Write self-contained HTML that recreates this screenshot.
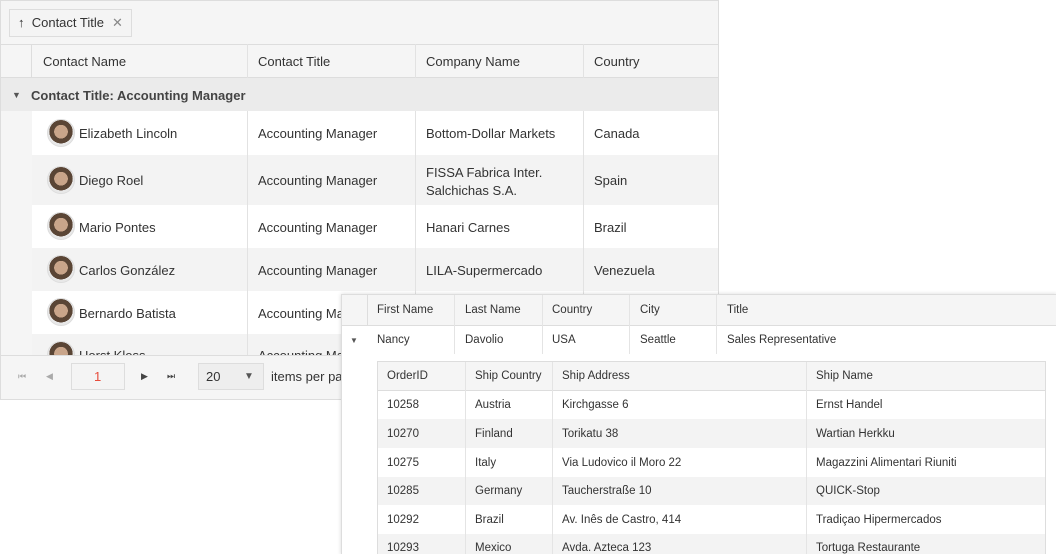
<html style="overflow:hidden"><head><style>
html,body{margin:0;width:1056px;height:554px;overflow:hidden}
body{background:#fff;font-family:"Liberation Sans",sans-serif;position:relative;color:#333}
div{box-sizing:border-box}
.a{position:absolute}
.t{position:absolute;font-size:13px;white-space:nowrap}
.s{position:absolute;font-size:11.5px;white-space:nowrap}
.av{position:absolute;width:28px;height:28px;border-radius:50%;background:radial-gradient(circle at 50% 45%,#c9a58a 0 35%,#5a4535 36% 60%,#e8e8e8 61%);border:1px solid #ddd}
</style></head><body>
<!-- grid 1 -->
<div class="a" style="left:0;top:0;width:719px;height:400px;border:1px solid #ddd;background:#f5f5f5"></div>
<div class="a" style="top:9px;left:9px;width:123px;height:28px;border:1px solid #ddd;background:#f4f4f4"></div>
<div class="t" style="left:18px;top:15px">↑&nbsp;&nbsp;Contact Title</div>
<div class="t" style="left:112px;top:15px;color:#888">✕</div>
<div class="a" style="left:1px;top:44px;width:717px;height:34px;background:#f5f5f5;border-top:1px solid #ddd;border-bottom:1px solid #ddd"></div>
<div class="a" style="left:31px;top:44px;width:1px;height:34px;background:#ddd"></div>
<div class="a" style="left:247px;top:44px;width:1px;height:311px;background:#e2e2e2"></div>
<div class="a" style="left:415px;top:44px;width:1px;height:311px;background:#e2e2e2"></div>
<div class="a" style="left:583px;top:44px;width:1px;height:311px;background:#e2e2e2"></div>
<div class="t" style="left:43px;top:54px">Contact Name</div>
<div class="t" style="left:258px;top:54px">Contact Title</div>
<div class="t" style="left:426px;top:54px">Company Name</div>
<div class="t" style="left:594px;top:54px">Country</div>
<div class="a" style="left:1px;top:78px;width:717px;height:33px;background:#ebebeb"></div>
<div class="t" style="left:12px;top:90px;font-size:9px;color:#555">▼</div>
<div class="t" style="left:31px;top:88px;font-weight:bold;color:#444">Contact Title: Accounting Manager</div>
<div class="a" style="left:32px;top:111px;width:686px;height:44px;background:#fff"></div>
<div class="a" style="left:32px;top:155px;width:686px;height:50px;background:#f3f3f3"></div>
<div class="a" style="left:32px;top:205px;width:686px;height:43px;background:#fff"></div>
<div class="a" style="left:32px;top:248px;width:686px;height:43px;background:#f3f3f3"></div>
<div class="a" style="left:32px;top:291px;width:686px;height:43px;background:#fff"></div>
<div class="a" style="left:32px;top:334px;width:686px;height:21px;background:#f3f3f3;overflow:hidden">
<div class="av" style="left:15px;top:7px;position:absolute"></div><div class="t" style="left:47px;top:14px">Horst Kloss</div><div class="t" style="left:226px;top:14px">Accounting Manager</div></div>
<div class="a" style="left:247px;top:111px;width:1px;height:244px;background:#e2e2e2"></div>
<div class="a" style="left:415px;top:111px;width:1px;height:244px;background:#e2e2e2"></div>
<div class="a" style="left:583px;top:111px;width:1px;height:244px;background:#e2e2e2"></div>
<div class="av" style="left:47px;top:119px"></div><div class="t" style="left:79px;top:126px">Elizabeth Lincoln</div><div class="t" style="left:258px;top:126px">Accounting Manager</div><div class="t" style="left:426px;top:126px">Bottom-Dollar Markets</div><div class="t" style="left:594px;top:126px">Canada</div>
<div class="av" style="left:47px;top:166px"></div><div class="t" style="left:79px;top:173px">Diego Roel</div><div class="t" style="left:258px;top:173px">Accounting Manager</div><div class="t" style="left:426px;top:164px;line-height:18px">FISSA Fabrica Inter.<br>Salchichas S.A.</div><div class="t" style="left:594px;top:173px">Spain</div>
<div class="av" style="left:47px;top:212px"></div><div class="t" style="left:79px;top:220px">Mario Pontes</div><div class="t" style="left:258px;top:220px">Accounting Manager</div><div class="t" style="left:426px;top:220px">Hanari Carnes</div><div class="t" style="left:594px;top:220px">Brazil</div>
<div class="av" style="left:47px;top:255px"></div><div class="t" style="left:79px;top:263px">Carlos González</div><div class="t" style="left:258px;top:263px">Accounting Manager</div><div class="t" style="left:426px;top:263px">LILA-Supermercado</div><div class="t" style="left:594px;top:263px">Venezuela</div>
<div class="av" style="left:47px;top:298px"></div><div class="t" style="left:79px;top:306px">Bernardo Batista</div><div class="t" style="left:258px;top:306px">Accounting Manager</div>
<div class="a" style="left:1px;top:355px;width:717px;height:44px;background:#f5f5f5;border-top:1px solid #ddd"></div>
<div class="t" style="left:18px;top:371px;font-size:9px;color:#aaa">⏮</div>
<div class="t" style="left:46px;top:371px;font-size:9px;color:#aaa">◀</div>
<div class="a" style="left:71px;top:363px;width:54px;height:27px;border:1px solid #ddd;background:#f4f4f4"></div>
<div class="t" style="left:94px;top:369px;color:#e74c3c">1</div>
<div class="t" style="left:141px;top:371px;font-size:9px;color:#444">▶</div>
<div class="t" style="left:167px;top:371px;font-size:9px;color:#444">⏭</div>
<div class="a" style="left:198px;top:363px;width:66px;height:27px;border:1px solid #ddd;background:#eee"></div>
<div class="t" style="left:206px;top:369px">20</div>
<div class="t" style="left:244px;top:371px;font-size:10px;color:#555">▼</div>
<div class="t" style="left:271px;top:369px">items per page</div>
<!-- grid 2 -->
<div class="a" style="left:341px;top:294px;width:716px;height:261px;background:#fff;border:1px solid #ddd;box-shadow:0 0 4px rgba(0,0,0,.15)"></div>
<div class="a" style="left:342px;top:295px;width:714px;height:31px;background:#f5f5f5;border-bottom:1px solid #ddd"></div>
<div class="a" style="left:367px;top:295px;width:1px;height:31px;background:#ddd"></div>
<div class="a" style="left:454px;top:295px;width:1px;height:59px;background:#e4e4e4"></div>
<div class="a" style="left:542px;top:295px;width:1px;height:59px;background:#e4e4e4"></div>
<div class="a" style="left:629px;top:295px;width:1px;height:59px;background:#e4e4e4"></div>
<div class="a" style="left:716px;top:295px;width:1px;height:59px;background:#e4e4e4"></div>
<div class="s" style="left:377px;top:304px">First Name</div><div class="s" style="left:465px;top:304px">Last Name</div><div class="s" style="left:552px;top:304px">Country</div><div class="s" style="left:640px;top:304px">City</div><div class="s" style="left:727px;top:304px">Title</div>
<div class="s" style="left:350px;top:336px;font-size:8px;color:#555">▼</div>
<div class="s" style="left:377px;top:334px">Nancy</div><div class="s" style="left:465px;top:334px">Davolio</div><div class="s" style="left:552px;top:334px">USA</div><div class="s" style="left:640px;top:334px">Seattle</div><div class="s" style="left:727px;top:334px">Sales Representative</div>
<div class="a" style="left:377px;top:361px;width:669px;height:193px;border:1px solid #ddd;border-bottom:none;background:#fff;overflow:hidden"></div>
<div class="a" style="left:378px;top:362px;width:667px;height:29px;background:#f5f5f5;border-bottom:1px solid #ddd"></div>
<div class="a" style="left:378px;top:419px;width:667px;height:29px;background:#f3f3f3"></div>
<div class="a" style="left:378px;top:477px;width:667px;height:28px;background:#f3f3f3"></div>
<div class="a" style="left:378px;top:534px;width:667px;height:20px;background:#f3f3f3"></div>
<div class="a" style="left:465px;top:362px;width:1px;height:192px;background:#e4e4e4"></div>
<div class="a" style="left:552px;top:362px;width:1px;height:192px;background:#e4e4e4"></div>
<div class="a" style="left:806px;top:362px;width:1px;height:192px;background:#e4e4e4"></div>
<div class="s" style="left:387px;top:370px">OrderID</div><div class="s" style="left:475px;top:370px">Ship Country</div><div class="s" style="left:562px;top:370px">Ship Address</div><div class="s" style="left:816px;top:370px">Ship Name</div>
<div class="s" style="left:387px;top:399px">10258</div><div class="s" style="left:475px;top:399px">Austria</div><div class="s" style="left:562px;top:399px">Kirchgasse 6</div><div class="s" style="left:816px;top:399px">Ernst Handel</div>
<div class="s" style="left:387px;top:428px">10270</div><div class="s" style="left:475px;top:428px">Finland</div><div class="s" style="left:562px;top:428px">Torikatu 38</div><div class="s" style="left:816px;top:428px">Wartian Herkku</div>
<div class="s" style="left:387px;top:457px">10275</div><div class="s" style="left:475px;top:457px">Italy</div><div class="s" style="left:562px;top:457px">Via Ludovico il Moro 22</div><div class="s" style="left:816px;top:457px">Magazzini Alimentari Riuniti</div>
<div class="s" style="left:387px;top:485px">10285</div><div class="s" style="left:475px;top:485px">Germany</div><div class="s" style="left:562px;top:485px">Taucherstraße 10</div><div class="s" style="left:816px;top:485px">QUICK-Stop</div>
<div class="s" style="left:387px;top:514px">10292</div><div class="s" style="left:475px;top:514px">Brazil</div><div class="s" style="left:562px;top:514px">Av. Inês de Castro, 414</div><div class="s" style="left:816px;top:514px">Tradiçao Hipermercados</div>
<div class="s" style="left:387px;top:542px">10293</div><div class="s" style="left:475px;top:542px">Mexico</div><div class="s" style="left:562px;top:542px">Avda. Azteca 123</div><div class="s" style="left:816px;top:542px">Tortuga Restaurante</div>
</body></html>
